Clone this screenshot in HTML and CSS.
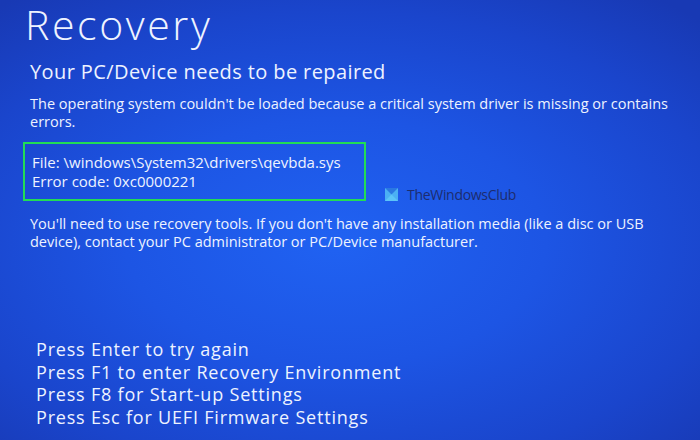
FILE: index.html
```html
<!DOCTYPE html>
<html lang="en">
<head>
<meta charset="utf-8">
<title>Recovery</title>
<link rel="stylesheet" href="styles.css">
</head>
<body>
<div class="screen">
  <h1 class="title">Recovery</h1>
  <h2 class="subtitle">Your PC/Device needs to be repaired</h2>
  <p class="msg">The operating system couldn't be loaded because a critical system driver is missing or contains<br>errors.</p>
  <div class="errbox">
    <div class="errline">File: \windows\System32\drivers\qevbda.sys</div>
    <div class="errline">Error code: 0xc0000221</div>
  </div>
  <p class="msg msg-tools">You'll need to use recovery tools. If you don't have any installation media (like a disc or USB<br>device), contact your PC administrator or PC/Device manufacturer.</p>
  <div class="keys">
    <div class="key">Press Enter to try again</div>
    <div class="key">Press F1 to enter Recovery Environment</div>
    <div class="key">Press F8 for Start-up Settings</div>
    <div class="key">Press Esc for UEFI Firmware Settings</div>
  </div>
  <div class="watermark">
    <svg class="wm-logo" width="13" height="13" viewBox="0 0 13 13">
      <rect x="0" y="0" width="13" height="13" fill="#4bb0f4"/>
      <polygon points="0,0 13,0 6.5,6.5" fill="#2a78e2"/>
      <polygon points="0,13 13,13 6.5,6.5" fill="#5cc4f8"/>
    </svg>
    <span class="wm-text">TheWindowsClub</span>
  </div>
</div>
</body>
</html>
```

FILE: styles.css
```css
html, body {
  margin: 0;
  padding: 0;
}
body {
  width: 700px;
  height: 440px;
  overflow: hidden;
  font-family: "Open Sans", "Noto Sans", "DejaVu Sans", sans-serif;
  color: #eef3ff;
}
.screen {
  position: relative;
  box-sizing: border-box;
  width: 700px;
  height: 440px;
  padding: 0 0 0 30px;
  display: flex;
  flex-direction: column;
  background:
    radial-gradient(ellipse 75% 70% at 48% 55%, #2062f2 0%, #1d55e4 40%, #1a45cc 75%, #1839b4 100%);
}
.title {
  margin: -1px 0 0 -5px;
  font-size: 41px;
  font-weight: 300;
  line-height: 50px;
  letter-spacing: 2.6px;
}
.subtitle {
  margin: 11px 0 0 0;
  font-size: 20px;
  font-weight: 400;
  line-height: 24px;
  letter-spacing: 0.4px;
}
.msg {
  margin: 11px 0 0 0;
  font-size: 14.5px;
  line-height: 18px;
}
.errbox {
  margin: 11px 0 0 -7px;
  width: 332px;
  height: 55px;
  border: 2px solid #22dc55;
  padding: 0 0 0 7px;
  display: flex;
  flex-direction: column;
  justify-content: center;
  font-size: 15px;
  line-height: 19px;
}
.msg-tools {
  margin-top: 14px;
}
.keys {
  margin-top: auto;
  padding: 0 0 12px 6px;
  font-size: 18px;
  line-height: 22.5px;
  letter-spacing: 0.8px;
}
.watermark {
  position: absolute;
  left: 385px;
  top: 185px;
  display: flex;
  align-items: center;
  gap: 9px;
}
.wm-text {
  font-size: 14px;
  color: #1d2c6e;
  letter-spacing: -0.3px;
}
```
